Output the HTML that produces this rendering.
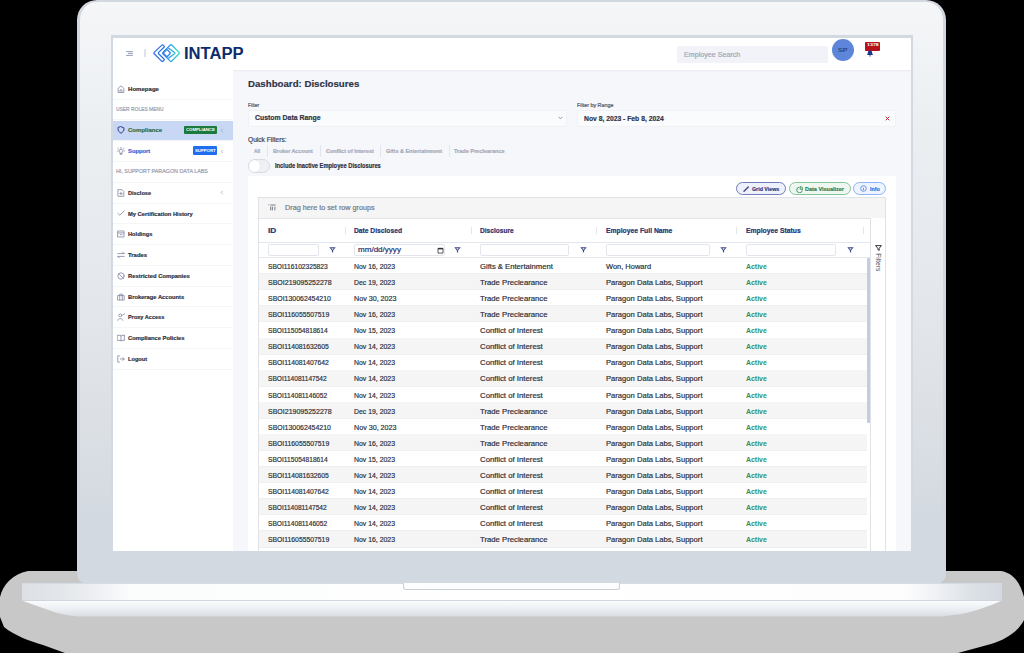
<!DOCTYPE html>
<html><head><meta charset="utf-8">
<style>
*{box-sizing:border-box;margin:0;padding:0}
html,body{width:1024px;height:653px;overflow:hidden;background:#000}
body{position:relative;font-family:"Liberation Sans",sans-serif;color:#2a2f3e}
.abs{position:absolute}
.a{position:absolute}
.t{position:absolute;line-height:1;white-space:nowrap;transform-origin:0 50%;-webkit-text-stroke:0.18px currentColor}
#lid{position:absolute;left:77px;top:0;width:869px;height:584px;border-radius:20px 20px 10px 10px;
 background:linear-gradient(#f4f6f8 0px,#eceff2 125px,#e5e8ec 275px,#dde1e6 405px,#d3d9e0 520px,#d3d9e0 583px);
 border:3px solid #d2d8df;border-top-width:2px;border-bottom:none}
#screen{position:absolute;left:111px;top:35px;width:802px;height:518px;background:#d3d9e0}
#ui{position:absolute;left:0;top:0;width:1024px;height:653px;clip-path:inset(38px 113px 102px 113px);background:#f6f7fb}
#basetop{position:absolute;left:22px;top:583px;width:980px;height:17px;
 background:linear-gradient(90deg,#dde1e6 0%,#e3e6ea 4%,#eff1f4 8%,#fbfcfc 11%,#ffffff 50%,#fdfdfe 90%,#eceff2 94%,#dce1e6 97%,#d3d9e0 100%);
 border-top:1px solid #d6dce3}
#notch{position:absolute;left:403px;top:583px;width:217px;height:7px;border:1px solid #c9d0d8;border-top:none;border-radius:0 0 3px 3px;background:#fdfdfe}

</style></head><body>
<svg class="abs" style="left:0;top:0" width="1024" height="653">
 <path d="M28 571 L1001 571 C1013 573 1020 582 1024 597 L1024 620 C1018 632 1005 640 991 644 L958 653 L65 653 L43 645 C30 641 15 636 4 627 L0 617 L0 597 C3 585 12 574 28 571 Z" fill="#c8c8c8"/>
 <defs>
  <linearGradient id="lipg" x1="0" y1="0" x2="0" y2="1">
   <stop offset="0" stop-color="#fbfcfd"/><stop offset="0.5" stop-color="#eef1f4"/><stop offset="1" stop-color="#d9dee4"/>
  </linearGradient>
 </defs>
 <path d="M22 600 L1002 600 L1001 601 C990 606 975 611 962 614 L941 616.5 L80 616.5 C68 616 58 613 57 613 L23 601 Z" fill="url(#lipg)"/>
 <line x1="22" y1="600.5" x2="1002" y2="600.5" stroke="#cfd6dd" stroke-width="1"/>
</svg>
<div id="lid"></div>
<div id="basetop"></div>
<div id="notch"></div>
<div id="screen"></div>

<div id="ui">
<div class="a" style="left:113.00px;top:38.00px;width:798.00px;height:32.00px;background:#fff;box-shadow:0 1px 2px rgba(30,40,70,0.06)"></div>
<div class="a" style="left:677.00px;top:45.70px;width:151.00px;height:17.00px;background:#f1f3f8;border-radius:2px"></div>
<div class="a" style="left:831.50px;top:38.80px;width:22.00px;height:22.00px;background:#5d86da;border-radius:50%"></div>
<div class="a" style="left:865.00px;top:42.00px;width:15.00px;height:8.60px;background:#b5121b;border-radius:1px"></div>
<div class="a" style="left:113.00px;top:70.00px;width:120.00px;height:481.00px;background:#fff"></div>
<div class="a" style="left:113.00px;top:98.59px;width:120.00px;height:1.00px;background:#f4f5f8"></div>
<div class="a" style="left:113.00px;top:119.38px;width:120.00px;height:1.00px;background:#f4f5f8"></div>
<div class="a" style="left:113.00px;top:120.78px;width:119.50px;height:20.00px;background:#c8d7f4"></div>
<div class="a" style="left:113.00px;top:140.17px;width:120.00px;height:1.00px;background:#f4f5f8"></div>
<div class="a" style="left:113.00px;top:160.96px;width:120.00px;height:1.00px;background:#f4f5f8"></div>
<div class="a" style="left:113.00px;top:181.75px;width:120.00px;height:1.00px;background:#f4f5f8"></div>
<div class="a" style="left:113.00px;top:202.54px;width:120.00px;height:1.00px;background:#f4f5f8"></div>
<div class="a" style="left:113.00px;top:223.33px;width:120.00px;height:1.00px;background:#f4f5f8"></div>
<div class="a" style="left:113.00px;top:244.12px;width:120.00px;height:1.00px;background:#f4f5f8"></div>
<div class="a" style="left:113.00px;top:264.91px;width:120.00px;height:1.00px;background:#f4f5f8"></div>
<div class="a" style="left:113.00px;top:285.70px;width:120.00px;height:1.00px;background:#f4f5f8"></div>
<div class="a" style="left:113.00px;top:306.49px;width:120.00px;height:1.00px;background:#f4f5f8"></div>
<div class="a" style="left:113.00px;top:327.28px;width:120.00px;height:1.00px;background:#f4f5f8"></div>
<div class="a" style="left:113.00px;top:348.07px;width:120.00px;height:1.00px;background:#f4f5f8"></div>
<div class="a" style="left:113.00px;top:368.86px;width:120.00px;height:1.00px;background:#f4f5f8"></div>
<svg class="a" style="left:116.5px;top:84.69px" width="8" height="8" viewBox="0 0 8 8" fill="none" stroke="#858ea6" stroke-width="0.85" stroke-linecap="round" stroke-linejoin="round"><path d="M1.1 7.2 V3.4 L4 0.8 L6.9 3.4 V7.2 Z M3 7.2 V4.9 H5 V7.2"/></svg>
<svg class="a" style="left:116.5px;top:126.28px" width="8" height="8" viewBox="0 0 8 8" fill="none" stroke="#858ea6" stroke-width="0.85" stroke-linecap="round" stroke-linejoin="round"><path d="M4 0.7 L7 1.9 L6.7 4.9 L4 7.3 L1.3 4.9 L1 1.9 Z" stroke="#2f3b8c" stroke-width="1"/></svg>
<svg class="a" style="left:116.5px;top:147.06px" width="8" height="8" viewBox="0 0 8 8" fill="none" stroke="#858ea6" stroke-width="0.85" stroke-linecap="round" stroke-linejoin="round"><path d="M2.9 6.2 V4.9 C2 4.3 2 2.2 4 2.2 C6 2.2 6 4.3 5.1 4.9 V6.2 Z M3.2 7.3 H4.8 M4 1.3 V0.2 M1.6 2 L0.8 1.3 M6.4 2 L7.2 1.3 M1.2 4 H0.2 M6.8 4 H7.8"/></svg>
<svg class="a" style="left:116.5px;top:188.65px" width="8" height="8" viewBox="0 0 8 8" fill="none" stroke="#858ea6" stroke-width="0.85" stroke-linecap="round" stroke-linejoin="round"><path d="M1.3 0.7 H5 L6.8 2.5 V7.3 H1.3 Z M4 3.3 V5.9 M2.7 4.6 H5.3"/></svg>
<svg class="a" style="left:116.5px;top:209.44px" width="8" height="8" viewBox="0 0 8 8" fill="none" stroke="#858ea6" stroke-width="0.85" stroke-linecap="round" stroke-linejoin="round"><path d="M0.8 4.3 L2.8 6.2 L7.2 1.9"/></svg>
<svg class="a" style="left:116.5px;top:230.22px" width="8" height="8" viewBox="0 0 8 8" fill="none" stroke="#858ea6" stroke-width="0.85" stroke-linecap="round" stroke-linejoin="round"><path d="M1 1 H7 V7 H1 Z M1 2.9 H7 M3.1 4.7 H4.9"/></svg>
<svg class="a" style="left:116.5px;top:251.02px" width="8" height="8" viewBox="0 0 8 8" fill="none" stroke="#858ea6" stroke-width="0.85" stroke-linecap="round" stroke-linejoin="round"><path d="M0.8 2.6 H7.2 M5.7 1.1 L7.2 2.6 M7.2 5.4 H0.8 M2.3 6.9 L0.8 5.4"/></svg>
<svg class="a" style="left:116.5px;top:271.80px" width="8" height="8" viewBox="0 0 8 8" fill="none" stroke="#858ea6" stroke-width="0.85" stroke-linecap="round" stroke-linejoin="round"><circle cx="4" cy="4" r="3.2"/><path d="M1.8 1.8 L6.2 6.2"/></svg>
<svg class="a" style="left:116.5px;top:292.59px" width="8" height="8" viewBox="0 0 8 8" fill="none" stroke="#858ea6" stroke-width="0.85" stroke-linecap="round" stroke-linejoin="round"><path d="M0.8 2.6 H7.2 V7 H0.8 Z M2.7 2.6 V1.1 H5.3 V2.6 M2.7 2.6 V7 M5.3 2.6 V7"/></svg>
<svg class="a" style="left:116.5px;top:313.38px" width="8" height="8" viewBox="0 0 8 8" fill="none" stroke="#858ea6" stroke-width="0.85" stroke-linecap="round" stroke-linejoin="round"><circle cx="3.3" cy="2.4" r="1.5"/><path d="M0.8 7.3 C0.8 4.9 5.8 4.9 5.8 7.3 M6.1 1.7 L7.5 0.9"/></svg>
<svg class="a" style="left:116.5px;top:334.17px" width="8" height="8" viewBox="0 0 8 8" fill="none" stroke="#858ea6" stroke-width="0.85" stroke-linecap="round" stroke-linejoin="round"><path d="M0.6 1.3 H3.3 C3.8 1.3 4 1.6 4 2.1 V7 C4 6.6 3.7 6.4 3.3 6.4 H0.6 Z M7.4 1.3 H4.7 C4.2 1.3 4 1.6 4 2.1 M7.4 1.3 V6.4 H4.7 C4.3 6.4 4 6.6 4 7"/></svg>
<svg class="a" style="left:116.5px;top:354.96px" width="8" height="8" viewBox="0 0 8 8" fill="none" stroke="#858ea6" stroke-width="0.85" stroke-linecap="round" stroke-linejoin="round"><path d="M2.4 0.8 H0.8 V7.2 H2.4 M3.4 4 H7.2 M5.8 2.6 L7.2 4 L5.8 5.4"/></svg>
<svg class="a" style="left:219.5px;top:127.78px" width="4" height="5" viewBox="0 0 4 5"><path d="M2.8 0.8 L1.2 2.5 L2.8 4.2" fill="none" stroke="#9aa1b2" stroke-width="0.7"/></svg>
<svg class="a" style="left:219.5px;top:148.56px" width="4" height="5" viewBox="0 0 4 5"><path d="M2.8 0.8 L1.2 2.5 L2.8 4.2" fill="none" stroke="#9aa1b2" stroke-width="0.7"/></svg>
<svg class="a" style="left:219.5px;top:190.15px" width="4" height="5" viewBox="0 0 4 5"><path d="M2.8 0.8 L1.2 2.5 L2.8 4.2" fill="none" stroke="#9aa1b2" stroke-width="0.7"/></svg>
<div class="a" style="left:184.00px;top:126.00px;width:33.20px;height:8.20px;background:#1b7a3d;border-radius:1px"></div>
<div class="a" style="left:192.60px;top:146.40px;width:24.60px;height:8.40px;background:#1f6ef0;border-radius:1px"></div>
<div class="a" style="left:248.00px;top:109.50px;width:318.50px;height:17.40px;background:#fafbfd;border:1px solid #f0f2f6;border-radius:2px"></div>
<div class="a" style="left:577.00px;top:109.50px;width:318.60px;height:17.40px;background:#fafbfd;border:1px solid #f0f2f6;border-radius:2px"></div>
<div class="a" style="left:266.60px;top:145.30px;width:0.80px;height:11.70px;background:#e3e6ec"></div>
<div class="a" style="left:319.50px;top:145.30px;width:0.80px;height:11.70px;background:#e3e6ec"></div>
<div class="a" style="left:379.50px;top:145.30px;width:0.80px;height:11.70px;background:#e3e6ec"></div>
<div class="a" style="left:448.60px;top:145.30px;width:0.80px;height:11.70px;background:#e3e6ec"></div>
<div class="a" style="left:247.90px;top:159.30px;width:22.00px;height:13.60px;background:#eef0f4;border:1px solid #d7dbe3;border-radius:7px"></div>
<div class="a" style="left:249.00px;top:160.40px;width:11.40px;height:11.40px;background:#fff;border-radius:50%;box-shadow:0 0 1px rgba(0,0,0,.15)"></div>
<div class="a" style="left:248.00px;top:176.00px;width:647.80px;height:380.00px;background:#fff"></div>
<div class="a" style="left:736.25px;top:181.90px;width:49.60px;height:13.60px;background:#eef0fb;border:1px solid #6f7cb8;border-radius:7px"></div>
<div class="a" style="left:789.00px;top:181.90px;width:61.60px;height:13.60px;background:#eef8f1;border:1px solid #86c39b;border-radius:7px"></div>
<div class="a" style="left:853.40px;top:181.90px;width:32.40px;height:13.60px;background:#eef4ff;border:1px solid #8fb3f5;border-radius:7px"></div>
<svg class="a" style="left:742.8px;top:186px" width="6.5" height="6" viewBox="0 0 6.5 6"><path d="M1 5.2 L5.3 0.9" stroke="#3b4a8e" stroke-width="1.4" stroke-linecap="round"/></svg>
<svg class="a" style="left:795.6px;top:185.6px" width="7.5" height="7.5" viewBox="0 0 7.5 7.5" fill="none" stroke="#2e8552" stroke-width="0.85"><path d="M6.3 4.4 A2.8 2.8 0 1 1 3.1 1.2"/><path d="M4.2 0.6 V3.3 H6.9 A2.7 2.7 0 0 0 4.2 0.6 Z"/></svg>
<svg class="a" style="left:860.3px;top:185.2px" width="7" height="7" viewBox="0 0 7 7" fill="none" stroke="#3c78e6" stroke-width="0.75"><circle cx="3.5" cy="3.5" r="2.8"/><path d="M3.5 3 V5.2 M3.5 1.9 V2.3"/></svg>
<div class="a" style="left:258.00px;top:197.20px;width:627.60px;height:360.00px;border:1px solid #dfe2e7;background:#fff"></div>
<div class="a" style="left:259.00px;top:198.20px;width:625.60px;height:20.60px;background:#f5f5f6;border-bottom:1px solid #e2e4e9"></div>
<svg class="a" style="left:267.5px;top:204.4px" width="8" height="7" viewBox="0 0 8 7" fill="none" stroke="#5a5d66" stroke-width="0.8"><path d="M2.3 1 H7.5 M2.7 2.6 V6.3 M4.4 2.6 V6.3 M6.9 2.6 V6.3"/><circle cx="0.9" cy="0.8" r="0.5" fill="#5a5d66" stroke="none"/></svg>
<div class="a" style="left:344.80px;top:227.20px;width:0.80px;height:6.40px;background:#e2e5ea"></div>
<div class="a" style="left:470.60px;top:227.20px;width:0.80px;height:6.40px;background:#e2e5ea"></div>
<div class="a" style="left:596.00px;top:227.20px;width:0.80px;height:6.40px;background:#e2e5ea"></div>
<div class="a" style="left:736.00px;top:227.20px;width:0.80px;height:6.40px;background:#e2e5ea"></div>
<div class="a" style="left:862.80px;top:227.20px;width:0.80px;height:6.40px;background:#e2e5ea"></div>
<div class="a" style="left:259.00px;top:241.90px;width:611.00px;height:1.00px;background:#e3e6eb"></div>
<div class="a" style="left:259.00px;top:257.20px;width:611.00px;height:1.00px;background:#e6e8ec"></div>
<div class="a" style="left:267.50px;top:243.80px;width:51.10px;height:11.80px;border:1px solid #e2e5eb;border-radius:2px;background:#fff"></div>
<svg class="a" style="left:328.80px;top:246.6px" width="7" height="6" viewBox="0 0 7 6"><path d="M0.3 0.3 H6.7 L4.1 3.4 V5.7 L2.9 5 V3.4 Z" fill="#3b4889"/><path d="M2.3 1.3 H4.7 L3.5 2.7 Z" fill="#fff"/></svg>
<div class="a" style="left:354.00px;top:243.80px;width:90.70px;height:11.80px;border:1px solid #e2e5eb;border-radius:2px;background:#fff"></div>
<svg class="a" style="left:454.40px;top:246.6px" width="7" height="6" viewBox="0 0 7 6"><path d="M0.3 0.3 H6.7 L4.1 3.4 V5.7 L2.9 5 V3.4 Z" fill="#3b4889"/><path d="M2.3 1.3 H4.7 L3.5 2.7 Z" fill="#fff"/></svg>
<div class="a" style="left:479.70px;top:243.80px;width:89.80px;height:11.80px;border:1px solid #e2e5eb;border-radius:2px;background:#fff"></div>
<svg class="a" style="left:579.80px;top:246.6px" width="7" height="6" viewBox="0 0 7 6"><path d="M0.3 0.3 H6.7 L4.1 3.4 V5.7 L2.9 5 V3.4 Z" fill="#3b4889"/><path d="M2.3 1.3 H4.7 L3.5 2.7 Z" fill="#fff"/></svg>
<div class="a" style="left:605.50px;top:243.80px;width:104.90px;height:11.80px;border:1px solid #e2e5eb;border-radius:2px;background:#fff"></div>
<svg class="a" style="left:720.30px;top:246.6px" width="7" height="6" viewBox="0 0 7 6"><path d="M0.3 0.3 H6.7 L4.1 3.4 V5.7 L2.9 5 V3.4 Z" fill="#3b4889"/><path d="M2.3 1.3 H4.7 L3.5 2.7 Z" fill="#fff"/></svg>
<div class="a" style="left:746.00px;top:243.80px;width:90.40px;height:11.80px;border:1px solid #e2e5eb;border-radius:2px;background:#fff"></div>
<svg class="a" style="left:846.70px;top:246.6px" width="7" height="6" viewBox="0 0 7 6"><path d="M0.3 0.3 H6.7 L4.1 3.4 V5.7 L2.9 5 V3.4 Z" fill="#3b4889"/><path d="M2.3 1.3 H4.7 L3.5 2.7 Z" fill="#fff"/></svg>
<svg class="a" style="left:436.6px;top:246.6px" width="7" height="7" viewBox="0 0 7 7"><path d="M1 1.3 H6 V6.1 H1 Z" fill="none" stroke="#333" stroke-width="0.8"/><path d="M1 1 H6 V2.4 H1 Z" fill="#333"/></svg>
<div class="a" style="left:870.00px;top:218.30px;width:14.60px;height:340.00px;background:#fff;border-left:1px solid #dfe2e7"></div>
<svg class="a" style="left:875.4px;top:244.6px" width="7" height="6" viewBox="0 0 7 6"><path d="M0.6 0.6 H6.4 L4.2 3.3 V5.4 L2.8 4.6 V3.3 Z" fill="none" stroke="#333" stroke-width="1"/></svg>
<div class="a" style="left:259.00px;top:273.18px;width:608.00px;height:0.60px;background:#efeff2"></div>
<div class="a" style="left:259.00px;top:273.68px;width:608.00px;height:16.08px;background:#f5f5f6"></div>
<div class="a" style="left:259.00px;top:289.26px;width:608.00px;height:0.60px;background:#efeff2"></div>
<div class="a" style="left:259.00px;top:305.34px;width:608.00px;height:0.60px;background:#efeff2"></div>
<div class="a" style="left:259.00px;top:305.84px;width:608.00px;height:16.08px;background:#f5f5f6"></div>
<div class="a" style="left:259.00px;top:321.42px;width:608.00px;height:0.60px;background:#efeff2"></div>
<div class="a" style="left:259.00px;top:337.50px;width:608.00px;height:0.60px;background:#efeff2"></div>
<div class="a" style="left:259.00px;top:338.00px;width:608.00px;height:16.08px;background:#f5f5f6"></div>
<div class="a" style="left:259.00px;top:353.58px;width:608.00px;height:0.60px;background:#efeff2"></div>
<div class="a" style="left:259.00px;top:369.66px;width:608.00px;height:0.60px;background:#efeff2"></div>
<div class="a" style="left:259.00px;top:370.16px;width:608.00px;height:16.08px;background:#f5f5f6"></div>
<div class="a" style="left:259.00px;top:385.74px;width:608.00px;height:0.60px;background:#efeff2"></div>
<div class="a" style="left:259.00px;top:401.82px;width:608.00px;height:0.60px;background:#efeff2"></div>
<div class="a" style="left:259.00px;top:402.32px;width:608.00px;height:16.08px;background:#f5f5f6"></div>
<div class="a" style="left:259.00px;top:417.90px;width:608.00px;height:0.60px;background:#efeff2"></div>
<div class="a" style="left:259.00px;top:433.98px;width:608.00px;height:0.60px;background:#efeff2"></div>
<div class="a" style="left:259.00px;top:434.48px;width:608.00px;height:16.08px;background:#f5f5f6"></div>
<div class="a" style="left:259.00px;top:450.06px;width:608.00px;height:0.60px;background:#efeff2"></div>
<div class="a" style="left:259.00px;top:466.14px;width:608.00px;height:0.60px;background:#efeff2"></div>
<div class="a" style="left:259.00px;top:466.64px;width:608.00px;height:16.08px;background:#f5f5f6"></div>
<div class="a" style="left:259.00px;top:482.22px;width:608.00px;height:0.60px;background:#efeff2"></div>
<div class="a" style="left:259.00px;top:498.30px;width:608.00px;height:0.60px;background:#efeff2"></div>
<div class="a" style="left:259.00px;top:498.80px;width:608.00px;height:16.08px;background:#f5f5f6"></div>
<div class="a" style="left:259.00px;top:514.38px;width:608.00px;height:0.60px;background:#efeff2"></div>
<div class="a" style="left:259.00px;top:530.46px;width:608.00px;height:0.60px;background:#efeff2"></div>
<div class="a" style="left:259.00px;top:530.96px;width:608.00px;height:16.08px;background:#f5f5f6"></div>
<div class="a" style="left:259.00px;top:546.54px;width:608.00px;height:0.60px;background:#efeff2"></div>
<div class="a" style="left:867.00px;top:257.80px;width:2.80px;height:165.70px;background:#c4cce0;border-radius:1px"></div>
<!-- hamburger -->
<svg class="a" style="left:125px;top:50px" width="9" height="7" viewBox="0 0 9 7"><path d="M1.2 1.6H7.8M3 3.4H7.8M1.2 5.4H7.8" stroke="#8891a8" stroke-width="0.9"/></svg>
<div class="a" style="left:144.4px;top:49px;width:1.2px;height:8px;background:#dde1ea"></div>
<!-- logo -->
<svg class="a" style="left:150px;top:42px" width="34" height="24" viewBox="0 0 34 24">
 <defs><linearGradient id="lg2" gradientUnits="userSpaceOnUse" x1="12" y1="0" x2="30" y2="0"><stop offset="0" stop-color="#2f74e8"/><stop offset="0.45" stop-color="#2a9fe0"/><stop offset="1" stop-color="#2fe6c6"/></linearGradient></defs>
 <path d="M11.6 3.4 L4.2 10.4 Q3.5 11.1 4.2 11.8 L11.6 19.1 Q12.3 19.8 13.1 19.1 L14 18.2 Q14.6 17.6 14 17 L8.6 11.8 Q7.9 11.1 8.6 10.4 L14 5.3 Q14.6 4.7 14 4.1 L13.1 3.3 Q12.3 2.6 11.6 3.4 Z" fill="none" stroke="#2f72ea" stroke-width="1.3" stroke-linejoin="round"/>
 <path d="M12.95 10.4 L20.3 3.05 Q21 2.35 21.7 3.05 L29.05 10.4 Q29.75 11.1 29.05 11.8 L21.7 19.15 Q21 19.85 20.3 19.15 L12.95 11.8 Q12.25 11.1 12.95 10.4 Z" fill="none" stroke="url(#lg2)" stroke-width="1.3"/>
 <path d="M18.3 5.9 L24.6 10.5 Q25.3 11.1 24.6 11.7 L18.3 16.3" fill="none" stroke="url(#lg2)" stroke-width="1.3" stroke-linejoin="round"/>
 <path d="M13.8 10.5 L16.3 8 Q16.9 7.4 17.5 8 L20 10.5 Q20.6 11.1 20 11.7 L17.5 14.2 Q16.9 14.8 16.3 14.2 L13.8 11.7 Q13.2 11.1 13.8 10.5 Z" fill="none" stroke="#3382e8" stroke-width="1.3"/>
</svg>
<!-- bell -->
<svg class="a" style="left:865.5px;top:50px" width="8" height="7" viewBox="0 0 8 7"><path d="M4 0.6 C2.3 0.6 1.8 2 1.8 3.2 L1 5 H7 L6.2 3.2 C6.2 2 5.7 0.6 4 0.6Z M3 5.6 A1 1 0 0 0 5 5.6Z" fill="#1b3a8c"/></svg>
<!-- select chevron -->
<svg class="a" style="left:557.5px;top:116px" width="5" height="4" viewBox="0 0 5 4"><path d="M0.6 0.8 L2.5 2.8 L4.4 0.8" fill="none" stroke="#6b7080" stroke-width="0.7"/></svg>
<!-- red x -->
<svg class="a" style="left:885px;top:115.5px" width="5" height="5" viewBox="0 0 5 5"><path d="M0.7 0.7 L4.3 4.3 M4.3 0.7 L0.7 4.3" stroke="#c0282f" stroke-width="1"/></svg>
<!-- Filters vertical -->
<div class="t" style="left:867.5px;top:259px;font-size:6.6px;color:#4a4f5a;-webkit-text-stroke:0;transform:rotate(90deg);transform-origin:50% 50%;width:20px;text-align:center">Filters</div>

<div id="t0" class="t" style="left:184.00px;top:45.76px;font-size:15.80px;font-weight:bold;color:#0d2c6c;transform:scaleX(1.0517);-webkit-text-stroke:0">INTAPP</div>
<div id="t1" class="t" style="left:684.00px;top:51.87px;font-size:6.60px;font-weight:normal;color:#a0a7b6;transform:scaleX(1.0817);">Employee Search</div>
<div id="t2" class="t" style="left:837.60px;top:47.96px;font-size:5.60px;font-weight:normal;color:#273a70;transform:scaleX(1.2854);-webkit-text-stroke:0.1px">SP</div>
<div id="t3" class="t" style="left:866.60px;top:44.44px;font-size:3.80px;font-weight:bold;color:#fff;transform:scaleX(1.3959);-webkit-text-stroke:0">1378</div>
<div id="t4" class="t" style="left:128.00px;top:85.75px;font-size:6.00px;font-weight:bold;color:#2b2f3d;transform:scaleX(1.0102);">Homepage</div>
<div id="t5" class="t" style="left:116.40px;top:106.74px;font-size:5.60px;font-weight:normal;color:#939bae;transform:scaleX(0.8800);">USER ROLES MENU</div>
<div id="t6" class="t" style="left:128.00px;top:127.34px;font-size:6.00px;font-weight:bold;color:#2a6d47;transform:scaleX(1.0054);">Compliance</div>
<div id="t7" class="t" style="left:128.00px;top:148.12px;font-size:6.00px;font-weight:bold;color:#3561d2;transform:scaleX(0.9696);">Support</div>
<div id="t8" class="t" style="left:116.40px;top:169.11px;font-size:5.60px;font-weight:normal;color:#939bae;transform:scaleX(0.9589);">HI, SUPPORT PARAGON DATA LABS</div>
<div id="t9" class="t" style="left:128.00px;top:189.71px;font-size:6.00px;font-weight:bold;color:#2b2f3d;transform:scaleX(0.9357);">Disclose</div>
<div id="t10" class="t" style="left:128.00px;top:210.50px;font-size:6.00px;font-weight:bold;color:#2b2f3d;transform:scaleX(0.9620);">My Certification History</div>
<div id="t11" class="t" style="left:128.00px;top:231.28px;font-size:6.00px;font-weight:bold;color:#2b2f3d;transform:scaleX(0.9466);">Holdings</div>
<div id="t12" class="t" style="left:128.00px;top:252.08px;font-size:6.00px;font-weight:bold;color:#2b2f3d;transform:scaleX(0.9866);">Trades</div>
<div id="t13" class="t" style="left:128.00px;top:272.86px;font-size:6.00px;font-weight:bold;color:#2b2f3d;transform:scaleX(0.9746);">Restricted Companies</div>
<div id="t14" class="t" style="left:128.00px;top:293.65px;font-size:6.00px;font-weight:bold;color:#2b2f3d;transform:scaleX(0.9612);">Brokerage Accounts</div>
<div id="t15" class="t" style="left:128.00px;top:314.44px;font-size:6.00px;font-weight:bold;color:#2b2f3d;transform:scaleX(0.9274);">Proxy Access</div>
<div id="t16" class="t" style="left:128.00px;top:335.23px;font-size:6.00px;font-weight:bold;color:#2b2f3d;transform:scaleX(0.9681);">Compliance Policies</div>
<div id="t17" class="t" style="left:128.00px;top:356.02px;font-size:6.00px;font-weight:bold;color:#2b2f3d;transform:scaleX(0.9396);">Logout</div>
<div id="t18" class="t" style="left:186.20px;top:128.19px;font-size:3.90px;font-weight:bold;color:#fff;transform:scaleX(1.1011);-webkit-text-stroke:0">COMPLIANCE</div>
<div id="t19" class="t" style="left:194.60px;top:148.69px;font-size:3.90px;font-weight:bold;color:#fff;transform:scaleX(1.0950);-webkit-text-stroke:0">SUPPORT</div>
<div id="t20" class="t" style="left:248.10px;top:78.60px;font-size:9.80px;font-weight:bold;color:#2f3447;transform:scaleX(0.9876);">Dashboard: Disclosures</div>
<div id="t21" class="t" style="left:248.00px;top:102.80px;font-size:5.30px;font-weight:normal;color:#4f5463;transform:scaleX(0.9507);">Filter</div>
<div id="t22" class="t" style="left:254.80px;top:115.37px;font-size:6.60px;font-weight:bold;color:#2f3447;transform:scaleX(1.0470);">Custom Data Range</div>
<div id="t23" class="t" style="left:577.30px;top:102.60px;font-size:5.30px;font-weight:normal;color:#4f5463;transform:scaleX(1.0133);">Filter by Range</div>
<div id="t24" class="t" style="left:584.30px;top:115.77px;font-size:6.60px;font-weight:bold;color:#2f3447;transform:scaleX(1.0257);">Nov 8, 2023 - Feb 8, 2024</div>
<div id="t25" class="t" style="left:247.90px;top:136.86px;font-size:6.40px;font-weight:normal;color:#3c4150;transform:scaleX(1.0349);">Quick Filters:</div>
<div id="t26" class="t" style="left:254.20px;top:149.25px;font-size:5.20px;font-weight:bold;color:#a3a9b9;transform:scaleX(0.9336);">All</div>
<div id="t27" class="t" style="left:272.90px;top:149.25px;font-size:5.20px;font-weight:bold;color:#a3a9b9;transform:scaleX(1.0288);">Broker Account</div>
<div id="t28" class="t" style="left:325.70px;top:149.25px;font-size:5.20px;font-weight:bold;color:#a3a9b9;transform:scaleX(1.0408);">Conflict of Interest</div>
<div id="t29" class="t" style="left:385.70px;top:149.25px;font-size:5.20px;font-weight:bold;color:#a3a9b9;transform:scaleX(1.0520);">Gifts &amp; Entertainment</div>
<div id="t30" class="t" style="left:454.40px;top:149.25px;font-size:5.20px;font-weight:bold;color:#a3a9b9;transform:scaleX(1.0632);">Trade Preclearance</div>
<div id="t31" class="t" style="left:274.50px;top:163.11px;font-size:6.30px;font-weight:bold;color:#2b2f3d;transform:scaleX(0.9105);">Include Inactive Employee Disclosures</div>
<div id="t32" class="t" style="left:751.90px;top:187.36px;font-size:5.60px;font-weight:bold;color:#2c3a80;transform:scaleX(0.9475);">Grid Views</div>
<div id="t33" class="t" style="left:805.00px;top:187.36px;font-size:5.60px;font-weight:bold;color:#2e7d4f;transform:scaleX(0.9823);">Data Visualizer</div>
<div id="t34" class="t" style="left:869.50px;top:187.36px;font-size:5.60px;font-weight:bold;color:#2f6fe0;transform:scaleX(0.9449);">Info</div>
<div id="t35" class="t" style="left:284.70px;top:204.52px;font-size:6.70px;font-weight:normal;color:#737886;transform:scaleX(1.0819);">Drag here to set row groups</div>
<div id="t36" class="t" style="left:267.80px;top:228.02px;font-size:6.90px;font-weight:bold;color:#263070;transform:scaleX(1.1873);">ID</div>
<div id="t37" class="t" style="left:354.20px;top:228.02px;font-size:6.90px;font-weight:bold;color:#263070;transform:scaleX(0.9715);">Date Disclosed</div>
<div id="t38" class="t" style="left:479.70px;top:228.02px;font-size:6.90px;font-weight:bold;color:#263070;transform:scaleX(0.9593);">Disclosure</div>
<div id="t39" class="t" style="left:605.50px;top:228.02px;font-size:6.90px;font-weight:bold;color:#263070;transform:scaleX(0.9851);">Employee Full Name</div>
<div id="t40" class="t" style="left:746.00px;top:228.02px;font-size:6.90px;font-weight:bold;color:#263070;transform:scaleX(0.9850);">Employee Status</div>
<div id="t41" class="t" style="left:357.70px;top:247.17px;font-size:6.60px;font-weight:normal;color:#2c3570;transform:scaleX(1.2197);">mm/dd/yyyy</div>
<div id="ra0" class="t" style="left:267.80px;top:262.87px;font-size:7.00px;font-weight:normal;color:#2c2f37;transform:scaleX(0.9486);">SBOI116102325823</div>
<div id="rb0" class="t" style="left:354.20px;top:262.87px;font-size:7.00px;font-weight:normal;color:#2c2f37;transform:scaleX(0.9842);">Nov 16, 2023</div>
<div id="rc0" class="t" style="left:479.70px;top:262.87px;font-size:7.00px;font-weight:normal;color:#2c2f37;transform:scaleX(1.0942);">Gifts &amp; Entertainment</div>
<div id="rd0" class="t" style="left:605.50px;top:262.87px;font-size:7.00px;font-weight:normal;color:#2c2f37;transform:scaleX(1.0667);">Won, Howard</div>
<div id="re0" class="t" style="left:746.00px;top:262.87px;font-size:7.00px;font-weight:bold;color:#34905a;transform:scaleX(0.9897);-webkit-text-stroke:0">Active</div>
<div id="ra1" class="t" style="left:267.80px;top:278.95px;font-size:7.00px;font-weight:normal;color:#2c2f37;transform:scaleX(1.0023);">SBOI219095252278</div>
<div id="rb1" class="t" style="left:354.20px;top:278.95px;font-size:7.00px;font-weight:normal;color:#2c2f37;transform:scaleX(0.9842);">Dec 19, 2023</div>
<div id="rc1" class="t" style="left:479.70px;top:278.95px;font-size:7.00px;font-weight:normal;color:#2c2f37;transform:scaleX(1.1026);">Trade Preclearance</div>
<div id="rd1" class="t" style="left:605.50px;top:278.95px;font-size:7.00px;font-weight:normal;color:#2c2f37;transform:scaleX(1.0875);">Paragon Data Labs, Support</div>
<div id="re1" class="t" style="left:746.00px;top:278.95px;font-size:7.00px;font-weight:bold;color:#34905a;transform:scaleX(0.9897);-webkit-text-stroke:0">Active</div>
<div id="ra2" class="t" style="left:267.80px;top:295.03px;font-size:7.00px;font-weight:normal;color:#2c2f37;transform:scaleX(0.9913);">SBOI130062454210</div>
<div id="rb2" class="t" style="left:354.20px;top:295.03px;font-size:7.00px;font-weight:normal;color:#2c2f37;transform:scaleX(1.0203);">Nov 30, 2023</div>
<div id="rc2" class="t" style="left:479.70px;top:295.03px;font-size:7.00px;font-weight:normal;color:#2c2f37;transform:scaleX(1.1026);">Trade Preclearance</div>
<div id="rd2" class="t" style="left:605.50px;top:295.03px;font-size:7.00px;font-weight:normal;color:#2c2f37;transform:scaleX(1.0875);">Paragon Data Labs, Support</div>
<div id="re2" class="t" style="left:746.00px;top:295.03px;font-size:7.00px;font-weight:bold;color:#34905a;transform:scaleX(0.9897);-webkit-text-stroke:0">Active</div>
<div id="ra3" class="t" style="left:267.80px;top:311.11px;font-size:7.00px;font-weight:normal;color:#2c2f37;transform:scaleX(0.9724);">SBOI116055507519</div>
<div id="rb3" class="t" style="left:354.20px;top:311.11px;font-size:7.00px;font-weight:normal;color:#2c2f37;transform:scaleX(0.9842);">Nov 16, 2023</div>
<div id="rc3" class="t" style="left:479.70px;top:311.11px;font-size:7.00px;font-weight:normal;color:#2c2f37;transform:scaleX(1.1026);">Trade Preclearance</div>
<div id="rd3" class="t" style="left:605.50px;top:311.11px;font-size:7.00px;font-weight:normal;color:#2c2f37;transform:scaleX(1.0875);">Paragon Data Labs, Support</div>
<div id="re3" class="t" style="left:746.00px;top:311.11px;font-size:7.00px;font-weight:bold;color:#34905a;transform:scaleX(0.9897);-webkit-text-stroke:0">Active</div>
<div id="ra4" class="t" style="left:267.80px;top:327.19px;font-size:7.00px;font-weight:normal;color:#2c2f37;transform:scaleX(0.9486);">SBOI115054818614</div>
<div id="rb4" class="t" style="left:354.20px;top:327.19px;font-size:7.00px;font-weight:normal;color:#2c2f37;transform:scaleX(0.9842);">Nov 15, 2023</div>
<div id="rc4" class="t" style="left:479.70px;top:327.19px;font-size:7.00px;font-weight:normal;color:#2c2f37;transform:scaleX(1.1130);">Conflict of Interest</div>
<div id="rd4" class="t" style="left:605.50px;top:327.19px;font-size:7.00px;font-weight:normal;color:#2c2f37;transform:scaleX(1.0875);">Paragon Data Labs, Support</div>
<div id="re4" class="t" style="left:746.00px;top:327.19px;font-size:7.00px;font-weight:bold;color:#34905a;transform:scaleX(0.9897);-webkit-text-stroke:0">Active</div>
<div id="ra5" class="t" style="left:267.80px;top:343.27px;font-size:7.00px;font-weight:normal;color:#2c2f37;transform:scaleX(0.9676);">SBOI114081632605</div>
<div id="rb5" class="t" style="left:354.20px;top:343.27px;font-size:7.00px;font-weight:normal;color:#2c2f37;transform:scaleX(0.9842);">Nov 14, 2023</div>
<div id="rc5" class="t" style="left:479.70px;top:343.27px;font-size:7.00px;font-weight:normal;color:#2c2f37;transform:scaleX(1.1130);">Conflict of Interest</div>
<div id="rd5" class="t" style="left:605.50px;top:343.27px;font-size:7.00px;font-weight:normal;color:#2c2f37;transform:scaleX(1.0875);">Paragon Data Labs, Support</div>
<div id="re5" class="t" style="left:746.00px;top:343.27px;font-size:7.00px;font-weight:bold;color:#34905a;transform:scaleX(0.9897);-webkit-text-stroke:0">Active</div>
<div id="ra6" class="t" style="left:267.80px;top:359.35px;font-size:7.00px;font-weight:normal;color:#2c2f37;transform:scaleX(0.9676);">SBOI114081407642</div>
<div id="rb6" class="t" style="left:354.20px;top:359.35px;font-size:7.00px;font-weight:normal;color:#2c2f37;transform:scaleX(0.9842);">Nov 14, 2023</div>
<div id="rc6" class="t" style="left:479.70px;top:359.35px;font-size:7.00px;font-weight:normal;color:#2c2f37;transform:scaleX(1.1130);">Conflict of Interest</div>
<div id="rd6" class="t" style="left:605.50px;top:359.35px;font-size:7.00px;font-weight:normal;color:#2c2f37;transform:scaleX(1.0875);">Paragon Data Labs, Support</div>
<div id="re6" class="t" style="left:746.00px;top:359.35px;font-size:7.00px;font-weight:bold;color:#34905a;transform:scaleX(0.9897);-webkit-text-stroke:0">Active</div>
<div id="ra7" class="t" style="left:267.80px;top:375.43px;font-size:7.00px;font-weight:normal;color:#2c2f37;transform:scaleX(0.9406);">SBOI114081147542</div>
<div id="rb7" class="t" style="left:354.20px;top:375.43px;font-size:7.00px;font-weight:normal;color:#2c2f37;transform:scaleX(0.9842);">Nov 14, 2023</div>
<div id="rc7" class="t" style="left:479.70px;top:375.43px;font-size:7.00px;font-weight:normal;color:#2c2f37;transform:scaleX(1.1130);">Conflict of Interest</div>
<div id="rd7" class="t" style="left:605.50px;top:375.43px;font-size:7.00px;font-weight:normal;color:#2c2f37;transform:scaleX(1.0875);">Paragon Data Labs, Support</div>
<div id="re7" class="t" style="left:746.00px;top:375.43px;font-size:7.00px;font-weight:bold;color:#34905a;transform:scaleX(0.9897);-webkit-text-stroke:0">Active</div>
<div id="ra8" class="t" style="left:267.80px;top:391.51px;font-size:7.00px;font-weight:normal;color:#2c2f37;transform:scaleX(0.9486);">SBOI114081146052</div>
<div id="rb8" class="t" style="left:354.20px;top:391.51px;font-size:7.00px;font-weight:normal;color:#2c2f37;transform:scaleX(0.9842);">Nov 14, 2023</div>
<div id="rc8" class="t" style="left:479.70px;top:391.51px;font-size:7.00px;font-weight:normal;color:#2c2f37;transform:scaleX(1.1130);">Conflict of Interest</div>
<div id="rd8" class="t" style="left:605.50px;top:391.51px;font-size:7.00px;font-weight:normal;color:#2c2f37;transform:scaleX(1.0875);">Paragon Data Labs, Support</div>
<div id="re8" class="t" style="left:746.00px;top:391.51px;font-size:7.00px;font-weight:bold;color:#34905a;transform:scaleX(0.9897);-webkit-text-stroke:0">Active</div>
<div id="ra9" class="t" style="left:267.80px;top:407.59px;font-size:7.00px;font-weight:normal;color:#2c2f37;transform:scaleX(1.0023);">SBOI219095252278</div>
<div id="rb9" class="t" style="left:354.20px;top:407.59px;font-size:7.00px;font-weight:normal;color:#2c2f37;transform:scaleX(0.9842);">Dec 19, 2023</div>
<div id="rc9" class="t" style="left:479.70px;top:407.59px;font-size:7.00px;font-weight:normal;color:#2c2f37;transform:scaleX(1.1026);">Trade Preclearance</div>
<div id="rd9" class="t" style="left:605.50px;top:407.59px;font-size:7.00px;font-weight:normal;color:#2c2f37;transform:scaleX(1.0875);">Paragon Data Labs, Support</div>
<div id="re9" class="t" style="left:746.00px;top:407.59px;font-size:7.00px;font-weight:bold;color:#34905a;transform:scaleX(0.9897);-webkit-text-stroke:0">Active</div>
<div id="ra10" class="t" style="left:267.80px;top:423.67px;font-size:7.00px;font-weight:normal;color:#2c2f37;transform:scaleX(0.9913);">SBOI130062454210</div>
<div id="rb10" class="t" style="left:354.20px;top:423.67px;font-size:7.00px;font-weight:normal;color:#2c2f37;transform:scaleX(1.0203);">Nov 30, 2023</div>
<div id="rc10" class="t" style="left:479.70px;top:423.67px;font-size:7.00px;font-weight:normal;color:#2c2f37;transform:scaleX(1.1026);">Trade Preclearance</div>
<div id="rd10" class="t" style="left:605.50px;top:423.67px;font-size:7.00px;font-weight:normal;color:#2c2f37;transform:scaleX(1.0875);">Paragon Data Labs, Support</div>
<div id="re10" class="t" style="left:746.00px;top:423.67px;font-size:7.00px;font-weight:bold;color:#34905a;transform:scaleX(0.9897);-webkit-text-stroke:0">Active</div>
<div id="ra11" class="t" style="left:267.80px;top:439.75px;font-size:7.00px;font-weight:normal;color:#2c2f37;transform:scaleX(0.9724);">SBOI116055507519</div>
<div id="rb11" class="t" style="left:354.20px;top:439.75px;font-size:7.00px;font-weight:normal;color:#2c2f37;transform:scaleX(0.9842);">Nov 16, 2023</div>
<div id="rc11" class="t" style="left:479.70px;top:439.75px;font-size:7.00px;font-weight:normal;color:#2c2f37;transform:scaleX(1.1026);">Trade Preclearance</div>
<div id="rd11" class="t" style="left:605.50px;top:439.75px;font-size:7.00px;font-weight:normal;color:#2c2f37;transform:scaleX(1.0875);">Paragon Data Labs, Support</div>
<div id="re11" class="t" style="left:746.00px;top:439.75px;font-size:7.00px;font-weight:bold;color:#34905a;transform:scaleX(0.9897);-webkit-text-stroke:0">Active</div>
<div id="ra12" class="t" style="left:267.80px;top:455.83px;font-size:7.00px;font-weight:normal;color:#2c2f37;transform:scaleX(0.9486);">SBOI115054818614</div>
<div id="rb12" class="t" style="left:354.20px;top:455.83px;font-size:7.00px;font-weight:normal;color:#2c2f37;transform:scaleX(0.9842);">Nov 15, 2023</div>
<div id="rc12" class="t" style="left:479.70px;top:455.83px;font-size:7.00px;font-weight:normal;color:#2c2f37;transform:scaleX(1.1130);">Conflict of Interest</div>
<div id="rd12" class="t" style="left:605.50px;top:455.83px;font-size:7.00px;font-weight:normal;color:#2c2f37;transform:scaleX(1.0875);">Paragon Data Labs, Support</div>
<div id="re12" class="t" style="left:746.00px;top:455.83px;font-size:7.00px;font-weight:bold;color:#34905a;transform:scaleX(0.9897);-webkit-text-stroke:0">Active</div>
<div id="ra13" class="t" style="left:267.80px;top:471.91px;font-size:7.00px;font-weight:normal;color:#2c2f37;transform:scaleX(0.9676);">SBOI114081632605</div>
<div id="rb13" class="t" style="left:354.20px;top:471.91px;font-size:7.00px;font-weight:normal;color:#2c2f37;transform:scaleX(0.9842);">Nov 14, 2023</div>
<div id="rc13" class="t" style="left:479.70px;top:471.91px;font-size:7.00px;font-weight:normal;color:#2c2f37;transform:scaleX(1.1130);">Conflict of Interest</div>
<div id="rd13" class="t" style="left:605.50px;top:471.91px;font-size:7.00px;font-weight:normal;color:#2c2f37;transform:scaleX(1.0875);">Paragon Data Labs, Support</div>
<div id="re13" class="t" style="left:746.00px;top:471.91px;font-size:7.00px;font-weight:bold;color:#34905a;transform:scaleX(0.9897);-webkit-text-stroke:0">Active</div>
<div id="ra14" class="t" style="left:267.80px;top:487.99px;font-size:7.00px;font-weight:normal;color:#2c2f37;transform:scaleX(0.9676);">SBOI114081407642</div>
<div id="rb14" class="t" style="left:354.20px;top:487.99px;font-size:7.00px;font-weight:normal;color:#2c2f37;transform:scaleX(0.9842);">Nov 14, 2023</div>
<div id="rc14" class="t" style="left:479.70px;top:487.99px;font-size:7.00px;font-weight:normal;color:#2c2f37;transform:scaleX(1.1130);">Conflict of Interest</div>
<div id="rd14" class="t" style="left:605.50px;top:487.99px;font-size:7.00px;font-weight:normal;color:#2c2f37;transform:scaleX(1.0875);">Paragon Data Labs, Support</div>
<div id="re14" class="t" style="left:746.00px;top:487.99px;font-size:7.00px;font-weight:bold;color:#34905a;transform:scaleX(0.9897);-webkit-text-stroke:0">Active</div>
<div id="ra15" class="t" style="left:267.80px;top:504.07px;font-size:7.00px;font-weight:normal;color:#2c2f37;transform:scaleX(0.9406);">SBOI114081147542</div>
<div id="rb15" class="t" style="left:354.20px;top:504.07px;font-size:7.00px;font-weight:normal;color:#2c2f37;transform:scaleX(0.9842);">Nov 14, 2023</div>
<div id="rc15" class="t" style="left:479.70px;top:504.07px;font-size:7.00px;font-weight:normal;color:#2c2f37;transform:scaleX(1.1130);">Conflict of Interest</div>
<div id="rd15" class="t" style="left:605.50px;top:504.07px;font-size:7.00px;font-weight:normal;color:#2c2f37;transform:scaleX(1.0875);">Paragon Data Labs, Support</div>
<div id="re15" class="t" style="left:746.00px;top:504.07px;font-size:7.00px;font-weight:bold;color:#34905a;transform:scaleX(0.9897);-webkit-text-stroke:0">Active</div>
<div id="ra16" class="t" style="left:267.80px;top:520.15px;font-size:7.00px;font-weight:normal;color:#2c2f37;transform:scaleX(0.9486);">SBOI114081146052</div>
<div id="rb16" class="t" style="left:354.20px;top:520.15px;font-size:7.00px;font-weight:normal;color:#2c2f37;transform:scaleX(0.9842);">Nov 14, 2023</div>
<div id="rc16" class="t" style="left:479.70px;top:520.15px;font-size:7.00px;font-weight:normal;color:#2c2f37;transform:scaleX(1.1130);">Conflict of Interest</div>
<div id="rd16" class="t" style="left:605.50px;top:520.15px;font-size:7.00px;font-weight:normal;color:#2c2f37;transform:scaleX(1.0875);">Paragon Data Labs, Support</div>
<div id="re16" class="t" style="left:746.00px;top:520.15px;font-size:7.00px;font-weight:bold;color:#34905a;transform:scaleX(0.9897);-webkit-text-stroke:0">Active</div>
<div id="ra17" class="t" style="left:267.80px;top:536.23px;font-size:7.00px;font-weight:normal;color:#2c2f37;transform:scaleX(0.9724);">SBOI116055507519</div>
<div id="rb17" class="t" style="left:354.20px;top:536.23px;font-size:7.00px;font-weight:normal;color:#2c2f37;transform:scaleX(0.9842);">Nov 16, 2023</div>
<div id="rc17" class="t" style="left:479.70px;top:536.23px;font-size:7.00px;font-weight:normal;color:#2c2f37;transform:scaleX(1.1026);">Trade Preclearance</div>
<div id="rd17" class="t" style="left:605.50px;top:536.23px;font-size:7.00px;font-weight:normal;color:#2c2f37;transform:scaleX(1.0875);">Paragon Data Labs, Support</div>
<div id="re17" class="t" style="left:746.00px;top:536.23px;font-size:7.00px;font-weight:bold;color:#34905a;transform:scaleX(0.9897);-webkit-text-stroke:0">Active</div>
</div>
</body></html>
